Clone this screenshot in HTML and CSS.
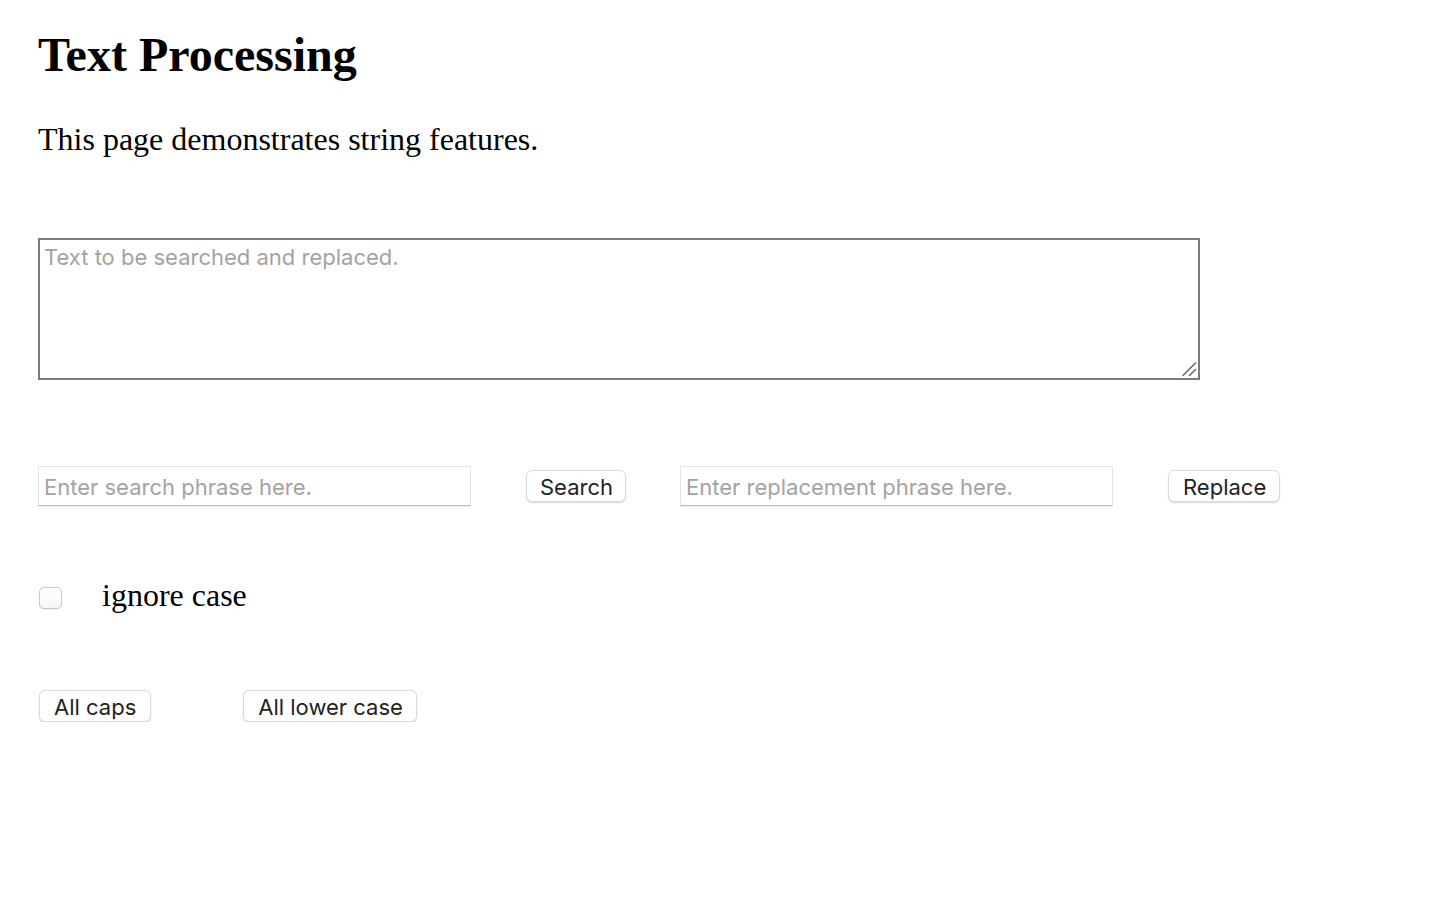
FILE: index.html
```html
<!DOCTYPE html>
<html lang="en">
<head>
<meta charset="utf-8">
<title>Text Processing</title>
<link rel="stylesheet" href="styles.css">
</head>
<body>
<main class="page">
  <h1 class="title">Text Processing</h1>
  <p class="intro">This page demonstrates string features.</p>
  <div class="source-wrap">
    <textarea class="source" placeholder="Text to be searched and replaced."></textarea>
    <svg class="grip" width="16" height="16" viewBox="0 0 16 16" aria-hidden="true">
      <path d="M2 14.5 L14.5 2 M8.5 14.5 L14.5 8.5" stroke="#6a6a6a" stroke-width="1.6" stroke-linecap="round" fill="none"/>
    </svg>
  </div>
  <div class="search-row">
    <input class="phrase" type="text" placeholder="Enter search phrase here.">
    <button class="btn btn-search" type="button">Search</button>
    <input class="phrase" type="text" placeholder="Enter replacement phrase here.">
    <button class="btn btn-replace" type="button">Replace</button>
  </div>
  <label class="case-row">
    <input class="check" type="checkbox">
    <span class="case-label">ignore case</span>
  </label>
  <div class="case-buttons">
    <button class="btn" type="button">All caps</button>
    <button class="btn btn-lower" type="button">All lower case</button>
  </div>
</main>
</body>
</html>
```
FILE: styles.css
```css
html, body {
  margin: 0;
  padding: 0;
  background: #ffffff;
}

.page {
  padding: 0 38px;
  font-family: "Liberation Serif", "Times New Roman", serif;
  font-size: 32px;
  color: #000;
}

.title {
  margin: 27px 0 0;
  font-size: 48px;
  font-weight: 700;
  line-height: 55px;
}

.intro {
  margin: 39px 0 0;
  line-height: 37px;
}

.source-wrap {
  position: relative;
  width: 1162px;
  margin-top: 80px;
}

.source {
  display: block;
  box-sizing: border-box;
  width: 1162px;
  height: 142px;
  margin: 0;
  border: 2px solid #7b7b7b;
  padding: 4px 4px;
  font-family: Inter, "Liberation Sans", sans-serif;
  font-size: 22px;
  line-height: 26px;
  color: #000;
  resize: none;
  outline: none;
}

.grip {
  position: absolute;
  right: 3px;
  bottom: 3px;
  pointer-events: none;
}

.source::placeholder,
.phrase::placeholder {
  color: #a3a3a3;
  opacity: 1;
}

.search-row {
  display: flex;
  align-items: center;
  margin-top: 86px;
}

.phrase {
  box-sizing: border-box;
  width: 433px;
  height: 40px;
  margin: 0 55px 0 0;
  padding: 2px 5px 0;
  border: 1px solid #e4e4e4;
  border-bottom-color: #b9b9b9;
  box-shadow: 0 1px 0 rgba(0, 0, 0, 0.05);
  font-family: Inter, "Liberation Sans", sans-serif;
  font-size: 22px;
  color: #000;
  background: #fff;
  outline: none;
}

.btn {
  box-sizing: border-box;
  height: 32px;
  margin: 0;
  padding: 0 14px;
  border: 1px solid #dadada;
  border-radius: 6px;
  background: #fff;
  box-shadow: 0 1px 1.5px rgba(0, 0, 0, 0.16);
  font-family: Inter, "Liberation Sans", sans-serif;
  font-size: 22px;
  line-height: 32px;
  color: #222;
}

.btn-search {
  margin-right: 54px;
  padding: 0 12px 0 13px;
}

.btn-replace {
  padding: 0 13px 0 14px;
}

.btn-lower {
  padding: 0 13px 0 14px;
}

.case-row {
  display: flex;
  align-items: flex-start;
  margin-top: 71px;
  line-height: 37px;
}

.check {
  appearance: none;
  -webkit-appearance: none;
  box-sizing: border-box;
  width: 23px;
  height: 22px;
  margin: 10px 0 0 1px;
  border: 1px solid #c8c8c8;
  border-radius: 5px;
  background: linear-gradient(#ffffff, #f6f6f6);
  box-shadow: 0 1px 1px rgba(0, 0, 0, 0.06);
}

.case-label {
  margin-left: 40px;
}

.case-buttons {
  display: flex;
  gap: 92px;
  margin-top: 76px;
  padding-left: 1px;
}
```
